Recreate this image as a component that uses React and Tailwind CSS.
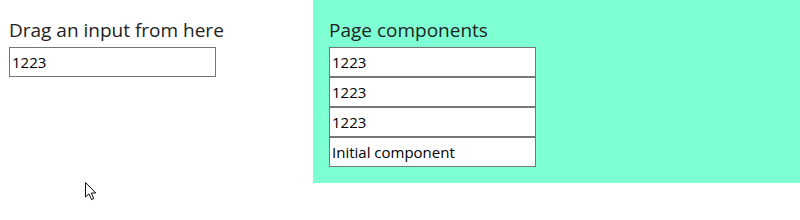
const rows = ["1223", "1223", "1223", "Initial component"];

const Field = ({ value }) => (
  <input
    readOnly
    value={value}
    className="block w-[207px] h-[30px] border border-[#767676] bg-white px-[2px] text-[15px] text-black outline-none"
  />
);

const Cursor = () => (
  <svg
    className="absolute left-[84px] top-[181px]"
    width="13"
    height="21"
    viewBox="0 0 13 21"
  >
    <path
      d="M1.5 1.5 L1.5 16 L5 12.8 L7.6 18.6 L9.8 17.6 L7.3 12 L11.8 12 Z"
      fill="white"
      stroke="#111"
      strokeWidth="1"
      strokeLinejoin="miter"
    />
  </svg>
);

const App = () => {
  return (
    <div className="relative flex w-[800px] h-[220px] bg-white font-['Open_Sans',sans-serif]">
      <div className="w-[313px] pl-[9px] pt-[16px]">
        <h2 className="text-[19px] leading-[28px] mb-[3px] text-[#222]">
          Drag an input from here
        </h2>
        <Field value="1223" />
      </div>
      <div className="flex-1 self-start bg-[#7fffd4] px-[16px] pt-[16px] pb-[16px]">
        <h2 className="text-[19px] leading-[28px] mb-[3px] text-[#222]">
          Page components
        </h2>
        {rows.map((r, i) => (
          <Field key={i} value={r} />
        ))}
      </div>
      <Cursor />
    </div>
  );
};

export default App;
